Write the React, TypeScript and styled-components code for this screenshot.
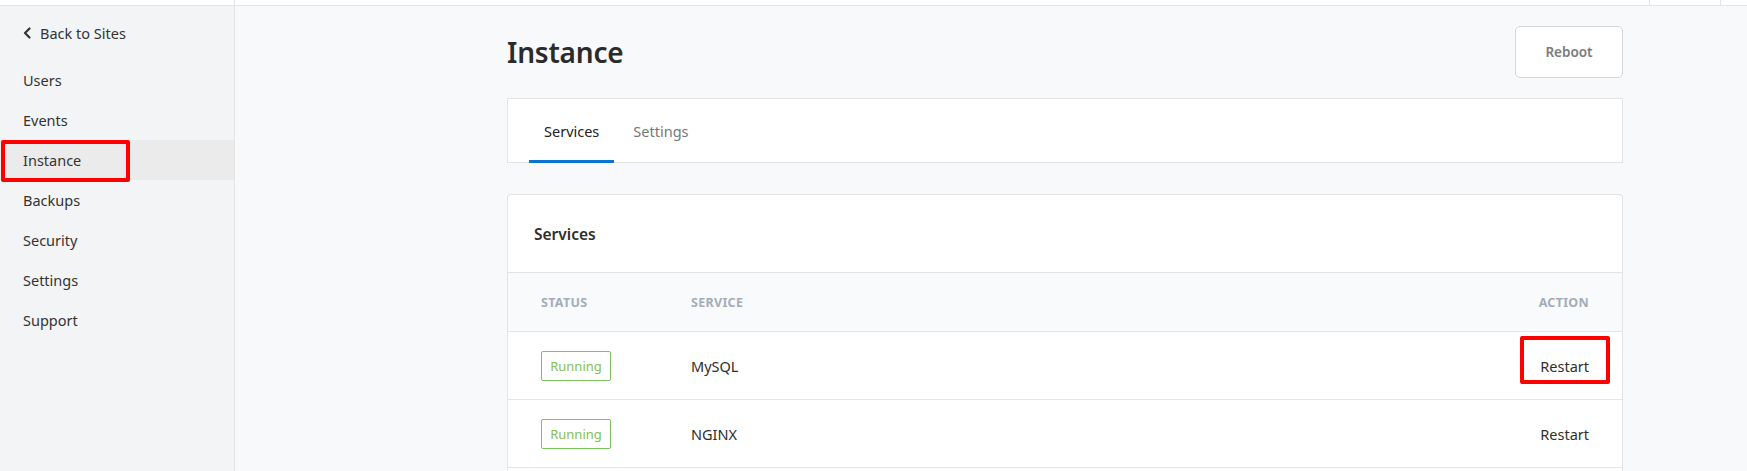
import React from "react";
import styled, { createGlobalStyle } from "styled-components";

const Global = createGlobalStyle`
  html, body { margin: 0; padding: 0; }
  body {
    width: 1747px;
    height: 471px;
    overflow: hidden;
    background: #f8f9fa;
    font-family: "Noto Sans", "Open Sans", Arial, sans-serif;
    color: #333;
  }
  * { box-sizing: border-box; }
`;

const Page = styled.div`
  position: relative;
  width: 1747px;
  height: 471px;
  display: flex;
  flex-direction: column;
  overflow: hidden;
`;

const TopBar = styled.div`
  height: 6px;
  flex-shrink: 0;
  background: #fff;
  border-bottom: 1px solid #e2e4e6;
  display: flex;
`;

const TopCell = styled.div<{ $w?: number; $grow?: boolean }>`
  ${(p) => (p.$grow ? "flex: 1;" : `width: ${p.$w}px;`)}
  border-right: 1px solid #e2e4e6;
  &:last-child { border-right: none; }
`;

const Body = styled.div`
  flex: 1;
  display: flex;
  min-height: 0;
`;

const Sidebar = styled.nav`
  width: 235px;
  flex-shrink: 0;
  background: #f3f4f6;
  border-right: 1px solid #e3e4e6;
  padding-top: 7px;
  display: flex;
  flex-direction: column;
`;

const BackLink = styled.a`
  height: 40px;
  display: flex;
  align-items: center;
  gap: 9px;
  padding-left: 23px;
  font-size: 14.5px;
  color: #333;
  margin-bottom: 7px;
  cursor: pointer;
`;

const NavItem = styled.a<{ $active?: boolean }>`
  height: 40px;
  display: flex;
  align-items: center;
  padding-left: 23px;
  font-size: 14.5px;
  color: #333;
  background: ${(p) => (p.$active ? "#ebebeb" : "transparent")};
  cursor: pointer;
`;

const Main = styled.main`
  flex: 1;
  padding: 20px 0 0 272px;
`;

const Container = styled.div`
  width: 1116px;
`;

const HeaderRow = styled.div`
  display: flex;
  justify-content: space-between;
  align-items: center;
  height: 52px;
  margin-bottom: 20px;
`;

const Title = styled.h1`
  margin: 0;
  font-size: 28px;
  font-weight: 600;
  color: #2b2b2b;
  letter-spacing: -0.2px;
`;

const Button = styled.button`
  width: 108px;
  height: 52px;
  background: #fff;
  border: 1px solid #d6d6d6;
  border-radius: 5px;
  font-family: inherit;
  font-size: 13.5px;
  font-weight: 600;
  color: #7b7b7b;
  cursor: pointer;
`;

const TabsCard = styled.div`
  height: 65px;
  background: #fff;
  border: 1px solid #e3e3e3;
  display: flex;
  align-items: stretch;
  padding-left: 21px;
  gap: 4px;
  margin-bottom: 31px;
`;

const Tab = styled.div<{ $active?: boolean }>`
  display: flex;
  align-items: center;
  padding: 3px 15px 0;
  font-size: 14.5px;
  color: ${(p) => (p.$active ? "#222" : "#777")};
  border-bottom: 3px solid ${(p) => (p.$active ? "#0a74d0" : "transparent")};
  margin-bottom: -1px;
`;

const Card = styled.div`
  background: #fff;
  border: 1px solid #e3e3e3;
  border-radius: 4px 4px 0 0;
  border-bottom: none;
  padding-bottom: 40px;
`;

const CardTitle = styled.div`
  height: 78px;
  display: flex;
  align-items: center;
  padding-left: 26px;
  font-size: 15.5px;
  font-weight: 600;
  color: #2e2e2e;
  border-bottom: 1px solid #e3e3e3;
`;

const Grid = styled.div`
  display: grid;
  grid-template-columns: 150px 1fr auto;
  padding: 0 33px;
  align-items: center;
`;

const HeadRow = styled(Grid)`
  height: 59px;
  background: #f9fafb;
  border-bottom: 1px solid #e5e5e5;
`;

const Row = styled(Grid)`
  height: 68px;
  border-bottom: 1px solid #e5e5e5;
`;

const Th = styled.div<{ $right?: boolean }>`
  font-size: 12.5px;
  font-weight: 700;
  color: #a3adb8;
  letter-spacing: 0.3px;
  text-align: ${(p) => (p.$right ? "right" : "left")};
`;

const Td = styled.div<{ $right?: boolean }>`
  font-size: 14.5px;
  color: #2e2e2e;
  text-align: ${(p) => (p.$right ? "right" : "left")};
`;

const Badge = styled.span`
  display: inline-flex;
  align-items: center;
  justify-content: center;
  width: 70px;
  height: 30px;
  border: 1px solid #7cc35a;
  border-radius: 2px;
  font-size: 13px;
  color: #86c04d;
`;

const Highlight = styled.div<{ $x: number; $y: number; $w: number; $h: number }>`
  position: absolute;
  left: ${(p) => p.$x}px;
  top: ${(p) => p.$y}px;
  width: ${(p) => p.$w}px;
  height: ${(p) => p.$h}px;
  border: 4px solid #ff0000;
  border-radius: 2px;
  pointer-events: none;
`;

const Chevron = () => (
  <svg width="8" height="12" viewBox="0 0 8 12" fill="none">
    <path d="M6.5 1.5L2 6l4.5 4.5" stroke="#333" strokeWidth="2.2" strokeLinecap="round" strokeLinejoin="round" />
  </svg>
);

const services = [
  { name: "MySQL" },
  { name: "NGINX" },
];

export default function App() {
  return (
    <>
      <Global />
      <Page>
        <TopBar>
          <TopCell $w={235} />
          <TopCell $grow />
          <TopCell $w={71} />
          <TopCell $w={26} />
        </TopBar>
        <Body>
          <Sidebar>
            <BackLink>
              <Chevron />
              Back to Sites
            </BackLink>
            <NavItem>Users</NavItem>
            <NavItem>Events</NavItem>
            <NavItem $active>Instance</NavItem>
            <NavItem>Backups</NavItem>
            <NavItem>Security</NavItem>
            <NavItem>Settings</NavItem>
            <NavItem>Support</NavItem>
          </Sidebar>
          <Main>
            <Container>
              <HeaderRow>
                <Title>Instance</Title>
                <Button>Reboot</Button>
              </HeaderRow>
              <TabsCard>
                <Tab $active>Services</Tab>
                <Tab>Settings</Tab>
              </TabsCard>
              <Card>
                <CardTitle>Services</CardTitle>
                <HeadRow>
                  <Th>STATUS</Th>
                  <Th>SERVICE</Th>
                  <Th $right>ACTION</Th>
                </HeadRow>
                {services.map((s) => (
                  <Row key={s.name}>
                    <div>
                      <Badge>Running</Badge>
                    </div>
                    <Td>{s.name}</Td>
                    <Td $right>Restart</Td>
                  </Row>
                ))}
              </Card>
            </Container>
          </Main>
        </Body>
        <Highlight $x={1} $y={140} $w={129} $h={42} />
        <Highlight $x={1520} $y={336} $w={90} $h={48} />
      </Page>
    </>
  );
}
